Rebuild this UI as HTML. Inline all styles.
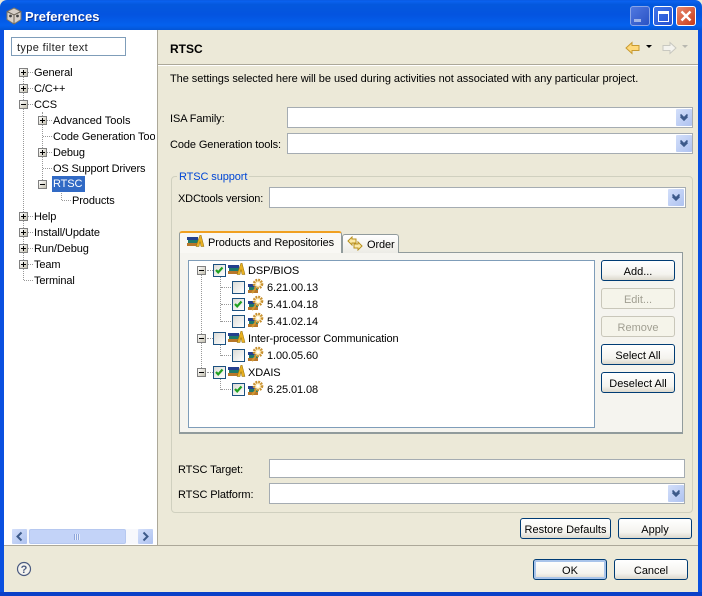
<!DOCTYPE html>
<html><head><meta charset="utf-8"><style>
html,body{margin:0;padding:0;background:#ece9d8}
#w{position:relative;width:702px;height:596px;overflow:hidden;background:#ece9d8;font:11px "Liberation Sans",sans-serif;color:#000}
#w div,#w svg{position:absolute}
.t{white-space:nowrap;line-height:14px;height:14px;margin-top:1px;letter-spacing:-.1px}
.f{background:#fff;border:1px solid #a5acb2;box-sizing:border-box}
.dd{width:16px;height:17px;background:linear-gradient(135deg,#d3dffa,#aec2f0);border-radius:1px}
.b{box-sizing:border-box;height:21px;border:1px solid #003c74;border-radius:3px;background:linear-gradient(#fff,#f4f3ee 70%,#dcd8cc);text-align:center;line-height:23px;white-space:nowrap}
.b.d{border-color:#c9c7ba;color:#a19f92;background:#f5f4ea}
.c{width:13px;height:13px;box-sizing:border-box;border:1px solid #1c5180;background:linear-gradient(135deg,#dcdcd7,#fff)}
.p{width:9px;height:9px;box-sizing:border-box;border:1px solid #808080;background:linear-gradient(135deg,#fff,#c4c0b0)}
.p:before{content:"";position:absolute;left:1px;top:3px;width:5px;height:1px;background:#000}
.p.x:after{content:"";position:absolute;left:3px;top:1px;width:1px;height:5px;background:#000}
.h{border-top:1px dotted #999;height:0}
.v{border-left:1px dotted #999;width:0}
</style></head><body><div id="w">
<svg width="0" height="0" style="left:0;top:0"><defs>
<g id="books"><rect x="0" y="8" width="11" height="3" fill="#b8772a"/><rect x="1" y="5" width="10" height="3" fill="#1f7a6a"/><rect x="0" y="2" width="11" height="3" fill="#24408f"/><path d="M9 11.500L13 0h1l3 11.500h-3l-1-5-1 5z" fill="#e8b020" stroke="#8a6a10" stroke-width=".5"/></g>
<g id="gear"><rect x="0" y="12" width="10" height="3" fill="#b8772a"/><rect x="1" y="9" width="9" height="3" fill="#1f7a6a"/><rect x="0" y="6" width="9" height="3" fill="#24408f"/><circle cx="10" cy="6" r="4" fill="#fff0c0" stroke="#c89030" stroke-width="2.6" stroke-dasharray="1.800 .9"/><circle cx="10" cy="6" r="1.500" fill="#fff"/><path d="M4 15L8 10" stroke="#d09830" stroke-width="2"/></g>
<path id="chk" d="M3 6l2.200 2.400L9.500 3.500" fill="none" stroke="#21a121" stroke-width="2.200"/>
<path id="chev" d="M4.500 6.500L8 10l3.500-3.500M4.500 4.500L8 8l3.500-3.500" fill="none" stroke="#3d5a8a" stroke-width="1.600"/>
</defs></svg>

<!-- title bar -->
<div style="left:0;top:0;width:702px;height:30px;background:linear-gradient(#0a5ae0 0,#0a62f0 4%,#0458dd 15%,#0454e0 50%,#0461ee 85%,#0355d5 100%);border-radius:7px 7px 0 0"></div>
<div style="left:0;top:30px;width:4px;height:566px;background:#0a50e0"></div>
<div style="left:698px;top:30px;width:4px;height:566px;background:#0a50e0"></div>
<div style="left:0;top:592px;width:702px;height:4px;background:#0a40c8"></div>
<svg style="left:5px;top:7px" width="18" height="18"><path d="M9 1l7 3.500v8L9 17l-7-4.500v-8z" fill="#d8d0c8" stroke="#7a7468"/><path d="M9 8v9M2 4.500l7 3.500 7-3.500" fill="none" stroke="#6a6458"/><circle cx="5.500" cy="9" r="1.400" fill="#444"/><circle cx="12.500" cy="9" r="1.400" fill="#444"/></svg>
<div class="t" style="left:25px;top:9px;color:#fff;font-weight:bold;font-size:13px;letter-spacing:0;text-shadow:1px 1px #0a2f90">Preferences</div>
<!-- window buttons -->
<div style="left:630px;top:6px;width:20px;height:20px;box-sizing:border-box;border:1px solid #8aa5e8;border-radius:3px;background:linear-gradient(135deg,#4f78e0,#2a52c4)"></div>
<div style="left:634px;top:19px;width:7px;height:3px;background:#9fb4e8"></div>
<div style="left:653px;top:6px;width:20px;height:20px;box-sizing:border-box;border:1px solid #fff;border-radius:3px;background:linear-gradient(135deg,#3f74ea,#2550d0)"></div>
<div style="left:658px;top:11px;width:11px;height:11px;box-sizing:border-box;border:1px solid #fff;border-top:3px solid #fff"></div>
<div style="left:676px;top:6px;width:20px;height:20px;box-sizing:border-box;border:1px solid #fff;border-radius:3px;background:linear-gradient(135deg,#e88a70,#c83a18)"></div>
<svg style="left:676px;top:6px" width="20" height="20"><path d="M5.500 5.500l9 9M14.500 5.500l-9 9" stroke="#fff" stroke-width="2.400"/></svg>

<!-- left panel -->
<div style="left:4px;top:30px;width:153px;height:515px;background:#fff"></div>
<div style="left:157px;top:30px;width:1px;height:515px;background:#aca899"></div>
<div style="left:4px;top:545px;width:694px;height:1px;background:#aca899"></div>
<div class="f t" style="left:11px;top:37px;width:115px;height:19px;margin:0;padding:3px 0 0 5px;border-color:#7f9db9;color:#222;letter-spacing:.35px">type filter text</div>

<div class="v" style="left:23px;top:72px;height:208px"></div>
<div class="v" style="left:42px;top:112px;height:72px"></div>
<div class="v" style="left:61px;top:190px;height:10px"></div>
<div class="h" style="left:28px;top:72px;width:5px"></div>
<div class="h" style="left:28px;top:88px;width:5px"></div>
<div class="h" style="left:28px;top:104px;width:5px"></div>
<div class="h" style="left:28px;top:216px;width:5px"></div>
<div class="h" style="left:28px;top:232px;width:5px"></div>
<div class="h" style="left:28px;top:248px;width:5px"></div>
<div class="h" style="left:28px;top:264px;width:5px"></div>
<div class="h" style="left:47px;top:120px;width:5px"></div>
<div class="h" style="left:47px;top:152px;width:5px"></div>
<div class="h" style="left:24px;top:280px;width:9px"></div>
<div class="h" style="left:43px;top:136px;width:9px"></div>
<div class="h" style="left:43px;top:168px;width:9px"></div>
<div class="h" style="left:62px;top:200px;width:9px"></div>
<div class="p x" style="left:19px;top:68px"></div>
<div class="p x" style="left:19px;top:84px"></div>
<div class="p" style="left:19px;top:100px"></div>
<div class="p x" style="left:38px;top:116px"></div>
<div class="p x" style="left:38px;top:148px"></div>
<div class="p" style="left:38px;top:180px"></div>
<div class="p x" style="left:19px;top:212px"></div>
<div class="p x" style="left:19px;top:228px"></div>
<div class="p x" style="left:19px;top:244px"></div>
<div class="p x" style="left:19px;top:260px"></div>
<div class="t" style="left:34px;top:65px">General</div>
<div class="t" style="left:34px;top:81px">C/C++</div>
<div class="t" style="left:34px;top:97px">CCS</div>
<div class="t" style="left:53px;top:113px;letter-spacing:0">Advanced Tools</div>
<div style="left:53px;top:129px;width:102px;height:16px;overflow:hidden"><div class="t" style="left:0;top:0">Code Generation Tools</div></div>
<div class="t" style="left:53px;top:145px">Debug</div>
<div class="t" style="left:53px;top:161px;letter-spacing:-.17px">OS Support Drivers</div>
<div class="t" style="left:52px;top:176px;width:33px;height:16px;line-height:16px;margin:0;background:#316ac5;color:#fff;text-indent:1px">RTSC</div>
<div class="t" style="left:72px;top:193px">Products</div>
<div class="t" style="left:34px;top:209px">Help</div>
<div class="t" style="left:34px;top:225px">Install/Update</div>
<div class="t" style="left:34px;top:241px">Run/Debug</div>
<div class="t" style="left:34px;top:257px">Team</div>
<div class="t" style="left:34px;top:273px">Terminal</div>

<!-- left scrollbar -->
<div style="left:12px;top:529px;width:141px;height:15px;background:#f7f8fc"></div>
<div class="dd" style="left:12px;top:529px;width:15px;height:15px"></div>
<svg style="left:12px;top:529px" width="15" height="15"><path d="M9.500 3.500L5.500 7.500l4 4" fill="none" stroke="#3d5a8a" stroke-width="2"/></svg>
<div style="left:29px;top:529px;width:97px;height:15px;box-sizing:border-box;border:1px solid #b6c8f0;background:#c3d3f8;border-radius:2px"></div>
<div style="left:74px;top:534px;width:6px;height:6px;background:repeating-linear-gradient(90deg,#8ea6dc 0 1px,#e6edfc 1px 2px)"></div>
<div class="dd" style="left:138px;top:529px;width:15px;height:15px"></div>
<svg style="left:138px;top:529px" width="15" height="15"><path d="M5.500 3.500l4 4-4 4" fill="none" stroke="#3d5a8a" stroke-width="2"/></svg>

<!-- help -->
<svg style="left:16px;top:561px" width="16" height="16"><circle cx="8" cy="8" r="6.500" fill="#f4f3ee" stroke="#4a5a80" stroke-width="1.200"/><text x="8" y="12" text-anchor="middle" font-family="Liberation Sans" font-size="11" font-weight="bold" fill="#4a5a80">?</text></svg>

<!-- header -->
<div class="t" style="left:170px;top:41px;font-weight:bold;font-size:12px;letter-spacing:0">RTSC</div>
<div style="left:158px;top:64px;width:540px;height:1px;background:#aca899"></div>
<div style="left:158px;top:65px;width:540px;height:1px;background:#fff"></div>
<svg style="left:625px;top:41px" width="16" height="14"><path d="M1 7l6-5.500v3h7v5h-7v3z" fill="#ffd97a" stroke="#c89a30"/></svg>
<svg style="left:646px;top:44px" width="7" height="6"><path d="M0 1h6L3 4z" fill="#000"/></svg>
<svg style="left:661px;top:41px" width="16" height="14"><path d="M15 7L9 1.500v3H2v5h7v3z" fill="#f4f3ee" stroke="#c8c8c0"/></svg>
<svg style="left:682px;top:44px" width="7" height="6"><path d="M0 1h6L3 4z" fill="#b8b8b0"/></svg>
<div class="t" style="left:170px;top:71px;letter-spacing:-.05px">The settings selected here will be used during activities not associated with any particular project.</div>

<div class="t" style="left:170px;top:111px">ISA Family:</div>
<div class="f" style="left:287px;top:107px;width:406px;height:21px"></div>
<div class="dd" style="left:676px;top:109px"></div>
<svg style="left:676px;top:110px" width="16" height="15"><use href="#chev"/></svg>
<div class="t" style="left:170px;top:137px">Code Generation tools:</div>
<div class="f" style="left:287px;top:133px;width:406px;height:21px"></div>
<div class="dd" style="left:676px;top:135px"></div>
<svg style="left:676px;top:136px" width="16" height="15"><use href="#chev"/></svg>

<!-- group -->
<div style="left:171px;top:176px;width:522px;height:337px;box-sizing:border-box;border:1px solid #d0d0bf;border-radius:4px"></div>
<div class="t" style="left:177px;top:169px;background:#ece9d8;padding:0 2px;color:#0046d5">RTSC support</div>
<div class="t" style="left:178px;top:191px;letter-spacing:-.17px">XDCtools version:</div>
<div class="f" style="left:269px;top:187px;width:417px;height:21px"></div>
<div class="dd" style="left:668px;top:189px"></div>
<svg style="left:668px;top:190px" width="16" height="15"><use href="#chev"/></svg>

<!-- tabs -->
<div style="left:179px;top:252px;width:504px;height:182px;box-sizing:border-box;border:1px solid #919b9c;border-bottom:2px solid #919b9c;background:#f5f4ef"></div>
<div style="left:342px;top:234px;width:57px;height:19px;box-sizing:border-box;border:1px solid #919b9c;border-bottom:0;border-radius:3px 3px 0 0;background:linear-gradient(#fff,#ecebe5)"></div>
<div style="left:179px;top:231px;width:163px;height:22px;box-sizing:border-box;border:1px solid #919b9c;border-top:2px solid #f0a020;border-bottom:0;border-radius:3px 3px 0 0;background:#f9f8f4"></div>
<svg style="left:187px;top:235px" width="18" height="13"><use href="#books"/></svg>
<div class="t" style="left:208px;top:235px;letter-spacing:-.12px">Products and Repositories</div>
<svg style="left:347px;top:236px" width="16" height="15"><path d="M1 5l4-4v2h4v4H5v2zM15 10l-4 4v-2H7V8h4V6z" fill="#fbe9a8" stroke="#b8901e"/></svg>
<div class="t" style="left:367px;top:237px">Order</div>

<!-- tree box -->
<div class="f" style="left:188px;top:260px;width:407px;height:168px;border-color:#7f9db9"></div>
<div class="v" style="left:201px;top:274px;height:100px"></div>
<div class="v" style="left:220px;top:276px;height:46px"></div>
<div class="v" style="left:220px;top:344px;height:12px"></div>
<div class="v" style="left:220px;top:378px;height:12px"></div>
<div class="h" style="left:207px;top:270px;width:6px"></div>
<div class="h" style="left:207px;top:338px;width:6px"></div>
<div class="h" style="left:207px;top:372px;width:6px"></div>
<div class="h" style="left:221px;top:287px;width:10px"></div>
<div class="h" style="left:221px;top:304px;width:10px"></div>
<div class="h" style="left:221px;top:321px;width:10px"></div>
<div class="h" style="left:221px;top:355px;width:10px"></div>
<div class="h" style="left:221px;top:389px;width:10px"></div>
<div class="p" style="left:197px;top:266px"></div>
<div class="p" style="left:197px;top:334px"></div>
<div class="p" style="left:197px;top:368px"></div>

<div class="c" style="left:213px;top:264px"></div><svg style="left:213px;top:264px" width="13" height="13"><use href="#chk"/></svg>
<svg style="left:228px;top:263px" width="18" height="13"><use href="#books"/></svg>
<div class="t" style="left:248px;top:263px">DSP/BIOS</div>
<div class="c" style="left:232px;top:281px"></div>
<svg style="left:248px;top:278px" width="16" height="16"><use href="#gear"/></svg>
<div class="t" style="left:267px;top:280px">6.21.00.13</div>
<div class="c" style="left:232px;top:298px"></div><svg style="left:232px;top:298px" width="13" height="13"><use href="#chk"/></svg>
<svg style="left:248px;top:295px" width="16" height="16"><use href="#gear"/></svg>
<div class="t" style="left:267px;top:297px">5.41.04.18</div>
<div class="c" style="left:232px;top:315px"></div>
<svg style="left:248px;top:312px" width="16" height="16"><use href="#gear"/></svg>
<div class="t" style="left:267px;top:314px">5.41.02.14</div>
<div class="c" style="left:213px;top:332px"></div>
<svg style="left:228px;top:331px" width="18" height="13"><use href="#books"/></svg>
<div class="t" style="left:248px;top:331px">Inter-processor Communication</div>
<div class="c" style="left:232px;top:349px"></div>
<svg style="left:248px;top:346px" width="16" height="16"><use href="#gear"/></svg>
<div class="t" style="left:267px;top:348px">1.00.05.60</div>
<div class="c" style="left:213px;top:366px"></div><svg style="left:213px;top:366px" width="13" height="13"><use href="#chk"/></svg>
<svg style="left:228px;top:365px" width="18" height="13"><use href="#books"/></svg>
<div class="t" style="left:248px;top:365px">XDAIS</div>
<div class="c" style="left:232px;top:383px"></div><svg style="left:232px;top:383px" width="13" height="13"><use href="#chk"/></svg>
<svg style="left:248px;top:380px" width="16" height="16"><use href="#gear"/></svg>
<div class="t" style="left:267px;top:382px">6.25.01.08</div>

<!-- side buttons -->
<div class="b" style="left:601px;top:260px;width:74px">Add...</div>
<div class="b d" style="left:601px;top:288px;width:74px">Edit...</div>
<div class="b d" style="left:601px;top:316px;width:74px">Remove</div>
<div class="b" style="left:601px;top:344px;width:74px">Select All</div>
<div class="b" style="left:601px;top:372px;width:74px">Deselect All</div>

<div class="t" style="left:178px;top:462px">RTSC Target:</div>
<div class="f" style="left:269px;top:459px;width:416px;height:19px"></div>
<div class="t" style="left:178px;top:487px">RTSC Platform:</div>
<div class="f" style="left:269px;top:483px;width:416px;height:21px"></div>
<div class="dd" style="left:668px;top:485px"></div>
<svg style="left:668px;top:486px" width="16" height="15"><use href="#chev"/></svg>

<div class="b" style="left:520px;top:518px;width:91px">Restore Defaults</div>
<div class="b" style="left:618px;top:518px;width:74px">Apply</div>
<div class="b" style="left:533px;top:559px;width:74px;height:21px;box-shadow:inset 0 0 0 2px #a9c4ea">OK</div>
<div class="b" style="left:614px;top:559px;width:74px;height:21px">Cancel</div>
</div></body></html>
